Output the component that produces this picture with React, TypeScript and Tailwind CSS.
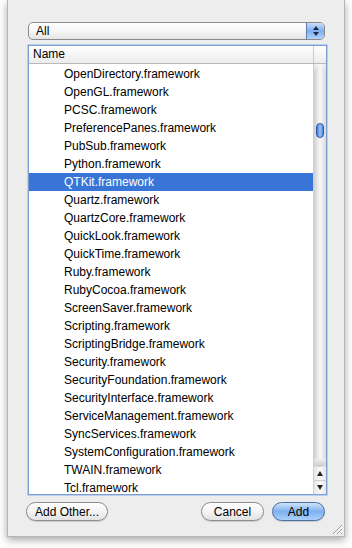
import React from 'react';

const frameworks = [
  'OpenDirectory.framework',
  'OpenGL.framework',
  'PCSC.framework',
  'PreferencePanes.framework',
  'PubSub.framework',
  'Python.framework',
  'QTKit.framework',
  'Quartz.framework',
  'QuartzCore.framework',
  'QuickLook.framework',
  'QuickTime.framework',
  'Ruby.framework',
  'RubyCocoa.framework',
  'ScreenSaver.framework',
  'Scripting.framework',
  'ScriptingBridge.framework',
  'Security.framework',
  'SecurityFoundation.framework',
  'SecurityInterface.framework',
  'ServiceManagement.framework',
  'SyncServices.framework',
  'SystemConfiguration.framework',
  'TWAIN.framework',
  'Tcl.framework',
];

const selected = 'QTKit.framework';

const font = { fontFamily: '"Lucida Grande", "Liberation Sans", Arial, sans-serif' };

const PushButton = ({ label, primary = false, className = '' }: { label: string; primary?: boolean; className?: string }) => (
  <button
    className={`h-[19px] rounded-full border text-[12px] leading-none text-black ${
      primary
        ? 'border-[#4a6fa5] bg-gradient-to-b from-[#cfe2fa] via-[#7fb1ee] to-[#a9d0fb]'
        : 'border-[#8c8c8c] bg-gradient-to-b from-white via-[#f4f4f4] to-[#e2e2e2]'
    } shadow-[0_1px_1px_rgba(0,0,0,0.15)] ${className}`}
  >
    {label}
  </button>
);

export default function App() {
  return (
    <div className="w-[352px] h-[548px] bg-white overflow-hidden" style={font}>
      <div className="ml-[7px] w-[338px] h-[537px] bg-[#ededed] border-x border-b border-[#b5b5b5] shadow-[0_3px_8px_rgba(0,0,0,0.35)] flex flex-col pl-[20px] pr-[19px] pt-[22px] relative">
        {/* popup */}
        <div className="h-[18px] w-[297px] flex rounded-[5px] border border-[#8a8a8a] overflow-hidden bg-gradient-to-b from-white via-[#f6f6f6] to-[#e4e4e4]">
          <div className="flex-1 pl-[7px] text-[12px] leading-[16px] text-black">All</div>
          <div className="w-[18px] border-l border-[#5c7fb3] bg-gradient-to-b from-[#c9def8] via-[#7eaef0] to-[#b3d4fb] flex flex-col items-center justify-center gap-[2px]">
            <svg width="6" height="4" viewBox="0 0 6 4"><path d="M3 0L6 4H0z" fill="#1b2a44" /></svg>
            <svg width="6" height="4" viewBox="0 0 6 4"><path d="M0 0H6L3 4z" fill="#1b2a44" /></svg>
          </div>
        </div>

        {/* list */}
        <div className="mt-[5px] w-[299px] h-[450px] border border-[#7d9fcf] shadow-[0_0_0_1px_#b8cff0] bg-white flex flex-col overflow-hidden">
          <div className="h-[18px] flex border-b border-[#b9b9b9] bg-gradient-to-b from-white to-[#ececec] shrink-0">
            <div className="flex-1 pl-[4px] text-[12px] leading-[17px] text-black border-r border-[#cccccc]">Name</div>
            <div className="w-[12px]" />
          </div>
          <div className="flex flex-1 min-h-0">
            <div className="flex-1 pt-[1px] overflow-hidden">
              {frameworks.map((name) => (
                <div
                  key={name}
                  className={`h-[18px] pl-[35px] text-[12px] leading-[18px] whitespace-nowrap ${
                    name === selected ? 'bg-[#3875d7] text-white' : 'text-black'
                  }`}
                >
                  {name}
                </div>
              ))}
            </div>
            {/* scrollbar */}
            <div className="w-[13px] flex flex-col bg-gradient-to-r from-[#e6e6e6] via-[#fafafa] to-[#e6e6e6] border-l border-[#cfcfcf]">
              <div className="flex-1 mt-[2px] rounded-t-full bg-gradient-to-r from-[#cfcfcf] via-[#f8f8f8] to-[#dadada] relative">
                <div className="absolute left-[2px] top-[57px] w-[8px] h-[15px] rounded-full border border-[#2a56a8] bg-gradient-to-r from-[#3d78d8] via-[#9cc5f7] to-[#4a86e0]" />
                <div className="absolute bottom-0 left-0 right-0 h-[8px] rounded-b-full bg-gradient-to-b from-[#eeeeee] to-[#c9c9c9]" />
              </div>
              <div className="h-[14px] flex items-center justify-center border-b border-[#d0d0d0]">
                <svg width="6" height="5" viewBox="0 0 6 5"><path d="M3 0L6 5H0z" fill="#222" /></svg>
              </div>
              <div className="h-[13px] flex items-center justify-center">
                <svg width="6" height="5" viewBox="0 0 6 5"><path d="M0 0H6L3 5z" fill="#222" /></svg>
              </div>
            </div>
          </div>
        </div>

        {/* buttons */}
        <div className="mt-[7px] flex items-center">
          <PushButton label="Add Other..." className="w-[82px] -ml-[2px]" />
          <div className="flex-1" />
          <PushButton label="Cancel" className="w-[63px]" />
          <PushButton label="Add" primary className="w-[53px] ml-[8px]" />
        </div>

        {/* resize grip */}
        <svg className="absolute right-[1px] bottom-[1px]" width="12" height="12" viewBox="0 0 12 12">
          <path d="M11 2L2 11M11 6L6 11M11 10L10 11" stroke="#9a9a9a" strokeWidth="1" />
          <path d="M11 3L3 11M11 7L7 11" stroke="#ffffff" strokeWidth="1" />
        </svg>
      </div>
    </div>
  );
}
